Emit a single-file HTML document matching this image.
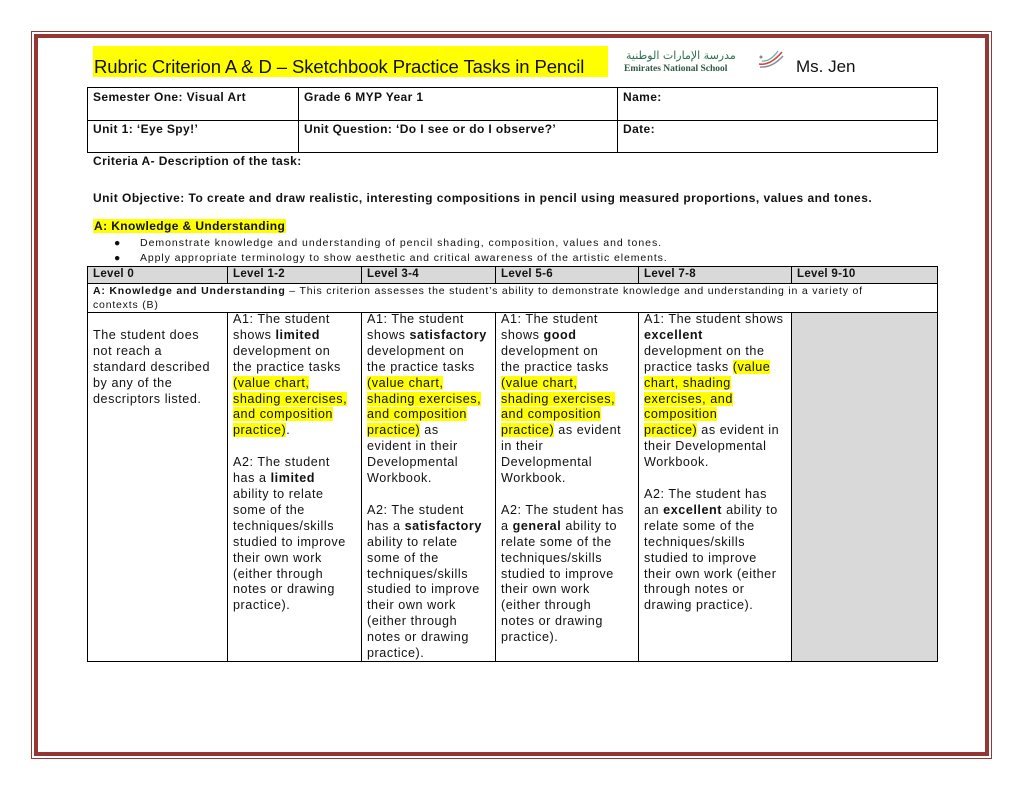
<!DOCTYPE html>
<html><head><meta charset="utf-8"><style>
*{margin:0;padding:0;box-sizing:border-box}
body{width:1023px;height:791px;background:#fff;position:relative;overflow:hidden;font-family:"Liberation Sans","DejaVu Sans",sans-serif;color:#111}
.a{position:absolute;white-space:nowrap}
.b{font-weight:bold}
.hl{background:#ffff00}
.ln{position:absolute;background:#000}
.cell{position:absolute;font-size:12.6px;line-height:15.9px;white-space:nowrap;top:312px;letter-spacing:0.55px}
</style></head><body>
<div style="position:absolute;left:31px;top:31px;width:961px;height:728px;border:1px solid #8c3a3a"></div>
<div style="position:absolute;left:34px;top:34px;width:955px;height:722px;border:4px solid #943634"></div>

<div class="a" style="left:93px;top:46px;width:515px;height:31px;background:#ffff00"></div>
<div class="a" style="left:94px;top:56px;font-size:18.5px;letter-spacing:-0.1px">Rubric Criterion A &amp; D – Sketchbook Practice Tasks in Pencil</div>
<div class="a" style="left:626px;top:49px;font-size:11px;color:#2b6e4e;font-family:'DejaVu Sans',sans-serif">مدرسة الإمارات الوطنية</div>
<div class="a" style="left:624px;top:64px;font-size:9.5px;font-weight:bold;color:#2c5a44;font-family:'Liberation Serif',serif">Emirates National School</div>
<svg class="a" style="left:756px;top:48px" width="30" height="24" viewBox="0 0 30 24"><path d="M3 16 Q14 18 26 4" stroke="#c44" stroke-width="1.6" fill="none"/><path d="M4 19 Q16 20 27 8" stroke="#889" stroke-width="1.4" fill="none"/><path d="M6 13 Q14 14 22 3" stroke="#6a9" stroke-width="1.2" fill="none"/><circle cx="5" cy="9" r="1.5" fill="#888"/></svg>
<div class="a" style="left:796px;top:57px;font-size:17px">Ms. Jen</div>

<div style="position:absolute;left:87px;top:87px;width:851px;height:66px;border:1px solid #000"></div>
<div class="ln" style="left:87px;top:120px;width:851px;height:1px"></div>
<div class="ln" style="left:298px;top:87px;width:1px;height:66px"></div>
<div class="ln" style="left:617px;top:87px;width:1px;height:66px"></div>
<div class="a b" style="left:93px;top:90px;font-size:12px;letter-spacing:0.4px">Semester One: Visual Art</div>
<div class="a b" style="left:304px;top:90px;font-size:12px;letter-spacing:0.4px">Grade 6 MYP Year 1</div>
<div class="a b" style="left:623px;top:90px;font-size:12px;letter-spacing:0.4px">Name:</div>
<div class="a b" style="left:93px;top:122px;font-size:12px;letter-spacing:0.4px">Unit 1: ‘Eye Spy!’</div>
<div class="a b" style="left:304px;top:122px;font-size:12px;letter-spacing:0.4px">Unit Question: ‘Do I see or do I observe?’</div>
<div class="a b" style="left:623px;top:122px;font-size:12px;letter-spacing:0.4px">Date:</div>

<div class="a b" style="left:93px;top:154px;font-size:12px;letter-spacing:0.4px">Criteria A- Description of the task:</div>
<div class="a b" style="left:93px;top:191px;font-size:12px;letter-spacing:0.47px">Unit Objective: To create and draw realistic, interesting compositions in pencil using measured proportions, values and tones.</div>
<div class="a b hl" style="left:93px;top:219px;font-size:12px;padding:0 1px;letter-spacing:0.4px">A: Knowledge &amp; Understanding</div>
<div class="a" style="left:114px;top:237px;font-size:10.5px">●</div>
<div class="a" style="left:140px;top:237px;font-size:10.5px;letter-spacing:0.98px">Demonstrate knowledge and understanding of pencil shading, composition, values and tones.</div>
<div class="a" style="left:114px;top:252px;font-size:10.5px">●</div>
<div class="a" style="left:140px;top:252px;font-size:10.5px;letter-spacing:0.9px">Apply appropriate terminology to show aesthetic and critical awareness of the artistic elements.</div>

<div style="position:absolute;left:87px;top:266px;width:851px;height:17px;background:#d9d9d9"></div>
<div style="position:absolute;left:791px;top:313px;width:146px;height:348px;background:#d9d9d9"></div>
<div style="position:absolute;left:87px;top:266px;width:851px;height:396px;border:1px solid #000"></div>
<div class="ln" style="left:87px;top:283px;width:851px;height:1px"></div>
<div class="ln" style="left:87px;top:312px;width:851px;height:1px"></div>
<div class="ln" style="left:227px;top:266px;width:1px;height:17px"></div>
<div class="ln" style="left:361px;top:266px;width:1px;height:17px"></div>
<div class="ln" style="left:495px;top:266px;width:1px;height:17px"></div>
<div class="ln" style="left:638px;top:266px;width:1px;height:17px"></div>
<div class="ln" style="left:791px;top:266px;width:1px;height:17px"></div>
<div class="ln" style="left:227px;top:312px;width:1px;height:350px"></div>
<div class="ln" style="left:361px;top:312px;width:1px;height:350px"></div>
<div class="ln" style="left:495px;top:312px;width:1px;height:350px"></div>
<div class="ln" style="left:638px;top:312px;width:1px;height:350px"></div>
<div class="ln" style="left:791px;top:312px;width:1px;height:350px"></div>

<div class="a b" style="left:93px;top:268px;font-size:11.5px;letter-spacing:0.3px">Level 0</div>
<div class="a b" style="left:233px;top:268px;font-size:11.5px;letter-spacing:0.3px">Level 1-2</div>
<div class="a b" style="left:367px;top:268px;font-size:11.5px;letter-spacing:0.3px">Level 3-4</div>
<div class="a b" style="left:501px;top:268px;font-size:11.5px;letter-spacing:0.3px">Level 5-6</div>
<div class="a b" style="left:644px;top:268px;font-size:11.5px;letter-spacing:0.3px">Level 7-8</div>
<div class="a b" style="left:797px;top:268px;font-size:11.5px;letter-spacing:0.3px">Level 9-10</div>
<div class="a" style="left:93px;top:284px;font-size:10.5px;line-height:14px;letter-spacing:0.8px"><b>A: Knowledge and Understanding</b> – This criterion assesses the student’s ability to demonstrate knowledge and understanding in a variety of<br>contexts (B)</div>

<div class="cell" style="left:93px"><br>The student does<br>not reach a<br>standard described<br>by any of the<br>descriptors listed.</div>
<div class="cell" style="left:233px">A1: The student<br>shows <b>limited</b><br>development on<br>the practice tasks<br><span class="hl">(value chart,</span><br><span class="hl">shading exercises,</span><br><span class="hl">and composition</span><br><span class="hl">practice)</span>.<br><br>A2: The student<br>has a <b>limited</b><br>ability to relate<br>some of the<br>techniques/skills<br>studied to improve<br>their own work<br>(either through<br>notes or drawing<br>practice).</div>
<div class="cell" style="left:367px">A1: The student<br>shows <b>satisfactory</b><br>development on<br>the practice tasks<br><span class="hl">(value chart,</span><br><span class="hl">shading exercises,</span><br><span class="hl">and composition</span><br><span class="hl">practice)</span> as<br>evident in their<br>Developmental<br>Workbook.<br><br>A2: The student<br>has a <b>satisfactory</b><br>ability to relate<br>some of the<br>techniques/skills<br>studied to improve<br>their own work<br>(either through<br>notes or drawing<br>practice).</div>
<div class="cell" style="left:501px">A1: The student<br>shows <b>good</b><br>development on<br>the practice tasks<br><span class="hl">(value chart,</span><br><span class="hl">shading exercises,</span><br><span class="hl">and composition</span><br><span class="hl">practice)</span> as evident<br>in their<br>Developmental<br>Workbook.<br><br>A2: The student has<br>a <b>general</b> ability to<br>relate some of the<br>techniques/skills<br>studied to improve<br>their own work<br>(either through<br>notes or drawing<br>practice).</div>
<div class="cell" style="left:644px">A1: The student shows<br><b>excellent</b><br>development on the<br>practice tasks <span class="hl">(value</span><br><span class="hl">chart, shading</span><br><span class="hl">exercises, and</span><br><span class="hl">composition</span><br><span class="hl">practice)</span> as evident in<br>their Developmental<br>Workbook.<br><br>A2: The student has<br>an <b>excellent</b> ability to<br>relate some of the<br>techniques/skills<br>studied to improve<br>their own work (either<br>through notes or<br>drawing practice).</div>
</body></html>
